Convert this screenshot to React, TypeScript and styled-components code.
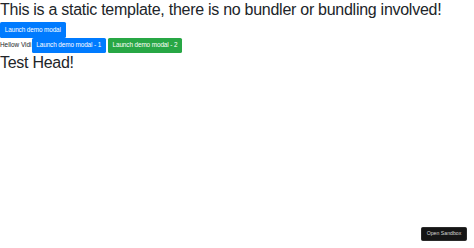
import React from "react";
import styled, { createGlobalStyle } from "styled-components";

const Global = createGlobalStyle`
  html, body { margin: 0; padding: 0; background: #fff; }
  body {
    font-family: "Liberation Sans", Arial, sans-serif;
    font-size: 6.4px;
    line-height: 1.5;
    color: #212529;
  }
`;

const Heading = styled.h1`
  margin: 0 0 3.2px 0;
  font-size: 16px;
  font-weight: 400;
  line-height: 1.2;
  letter-spacing: -0.017em;
  color: #212529;
`;

const Row = styled.div`
  line-height: 1.5;
`;

const Button = styled.button<{ $variant?: "primary" | "success" }>`
  display: inline-block;
  font-family: inherit;
  font-size: 6.4px;
  line-height: 9.6px;
  letter-spacing: -0.017em;
  font-weight: 400;
  padding: 2.8px 4.8px;
  margin: 0;
  border: none;
  border-radius: 1.6px;
  color: #fff;
  background: ${(p) => (p.$variant === "success" ? "#28a745" : "#007bff")};
  vertical-align: middle;
  cursor: pointer;
`;

const Sandbox = styled.a`
  position: fixed;
  right: 7px;
  bottom: 7px;
  box-sizing: border-box;
  width: 46px;
  height: 14px;
  display: flex;
  align-items: center;
  justify-content: center;
  background: #151515;
  border: 1px solid #2a2a2a;
  border-radius: 1.6px;
  color: #d8d8d8;
  font-size: 5.2px;
  text-decoration: none;
  font-family: "Liberation Sans", Arial, sans-serif;
`;

export default function App() {
  return (
    <>
      <Global />
      <Heading>This is a static template, there is no bundler or bundling involved!</Heading>
      <Button $variant="primary">Launch demo modal</Button>
      <Row>
        Hellow Vidi<Button $variant="primary">Launch demo modal - 1</Button>{" "}
        <Button $variant="success">Launch demo modal - 2</Button>
      </Row>
      <Heading>Test Head!</Heading>
      <Sandbox href="#">Open Sandbox</Sandbox>
    </>
  );
}
